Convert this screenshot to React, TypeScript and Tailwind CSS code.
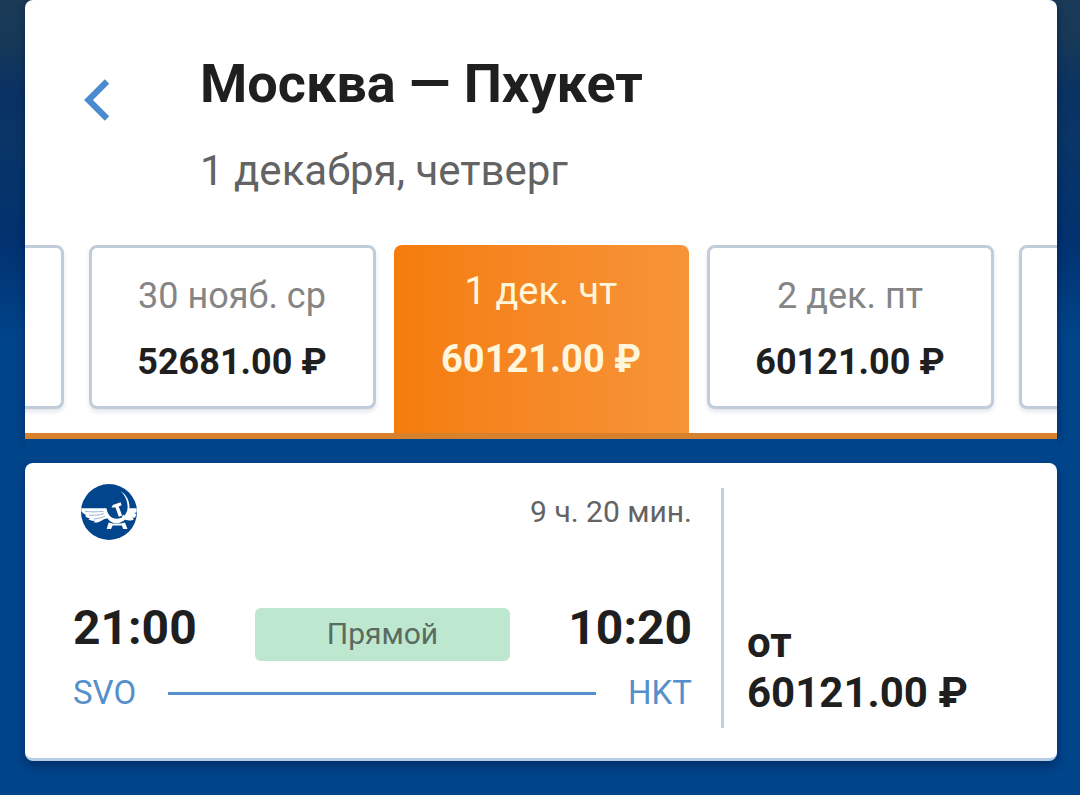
import { useState } from 'react';
import { clsx } from 'clsx';

interface Day {
    id: number;
    date: string;
    price: string;
}

const DAYS: Day[] = [
    { id: 0, date: '', price: '' },
    { id: 1, date: '30 нояб. ср', price: '52681.00 ₽' },
    { id: 2, date: '1 дек. чт', price: '60121.00 ₽' },
    { id: 3, date: '2 дек. пт', price: '60121.00 ₽' },
    { id: 4, date: '', price: '' },
];

function BackIcon() {
    return (
        <svg viewBox="0 0 26 42" className="w-[26px] h-[42px]" fill="none" stroke="#4a8bd0" strokeWidth="6.2" strokeLinejoin="miter">
            <path d="M23 2.500 4.500 21 23 39.500" />
        </svg>
    );
}

// Round airline badge: winged hammer and sickle
function AirlineLogo() {
    return (
        <svg viewBox="0 0 56 56" className="w-14 h-14" role="img" aria-label="Аэрофлот">
            <circle cx="28" cy="28" r="28" fill="#03458c" />
            <g fill="#fff">
                <path d="M.3 24.300H24c.1 4.200 1.300 7 3.500 9.700l-4.500 1.200c-3.600 2.200-6.600 3.800-10.400 3.300l1.400-1.700c-2.600.4-5.200-.3-6.800-1.700l2.200-.6c-3-.4-4.600-1.500-5.600-3l2-.3C3.400 30.500 1.500 29.100.3 27.300Z" />
                <path d="M47.600 24.300h8.100v4.300l-2.700.3 2.300 1.200c-.4 1.400-.6 2.200-1.300 3.600l-2.600-.1 1.500 1.600c-1.800 1.500-5 1.800-8.700.4 2.200-3 3.400-6.600 3.400-11.300Z" />
                <path d="m27.600 38.600 3.900.8 8.500.2 3.900-1 2.600 6.400h-4.300l-1.300-3.500H31.700L30 45h-4.300Z" />
                <path d="m30.600 23.400 1.200-2.300 7.800-2.800 1 3-2.900 1.100 3.400 9-3.300 1.400-3.300-9.300Z" />
                <path d="M39.500 7c5.800 3.600 9 9.500 9 16.300 0 9.300-5.600 15.900-13 15.900-6.800 0-11.500-5.500-12-14.900h1.900c1.300 6.700 5 10.500 10.100 10.500 6.400 0 11.100-4.900 11.100-11.700 0-6.200-2.400-11.500-7.100-16.100Z" />
                <path d="m42.300 30.800 4.700 4-1.500 1.500-4.700-4.100Z" />
            </g>
            <path d="M4 27.300c6 .8 12 .7 18.500 0M8 31.200c5.500.4 10.500-.2 15-1.500M12.500 35c4.500-.2 8-1.200 11.500-2.800" fill="none" stroke="#6f96c2" strokeWidth=".7" />
        </svg>
    );
}

interface DayTabProps {
    day: Day;
    active: boolean;
    onSelect: () => void;
}

function DayTab({ day, active, onSelect }: DayTabProps) {
    return (
        <button
            type="button"
            onClick={onSelect}
            aria-label={day.date || 'Другая дата'}
            className={clsx(
                'shrink-0 flex flex-col items-center whitespace-nowrap cursor-pointer',
                active
                    ? 'w-[295px] h-[188px] -mx-[7px] pt-5 gap-4 rounded-t-lg bg-linear-to-r from-[#f57c0a] to-[#f79437] text-[#fff6dc] text-[38px]'
                    : 'w-[287px] h-[164px] pt-[22px] gap-[14px] rounded-lg border-[3px] border-[#c1ccdb] bg-white shadow-[0_3px_4px_rgba(40,60,110,0.12)] text-4xl'
            )}
        >
            <span className={clsx('leading-[52px]', !active && 'text-[#858585]')}>{day.date}</span>
            <span className={clsx('font-bold leading-[52px]', !active && 'text-[#1f1f1f]')}>{day.price}</span>
        </button>
    );
}

export default function App() {
    const [selected, setSelected] = useState(2);

    return (
        <div className="min-h-screen pl-[25px] pr-[23px] pb-8 bg-[#00448a] bg-[linear-gradient(#1a3a57_0,#173957_40px,#0a3263_90px,#093566_140px,#02316f_240px,#00448a_340px)] font-['Roboto',sans-serif] text-[#1f1f1f]">
            <header className="overflow-hidden rounded-t-lg bg-white border-b-[6px] border-[#d7812d] shadow-[0_2px_8px_rgba(0,20,60,0.5)]">
                <div className="flex pt-[51px] pl-[59px]">
                    <button type="button" aria-label="Назад" className="w-[116px] h-[42px] mt-7 shrink-0 cursor-pointer">
                        <BackIcon />
                    </button>
                    <div>
                        <h1 className="text-[54px] leading-[66px] font-bold">Москва — Пхукет</h1>
                        <p className="mt-7 text-[42px] leading-[52px] text-[#636363]">1 декабря, четверг</p>
                    </div>
                </div>
                <nav aria-label="Даты" className="mt-12 h-[188px] flex justify-center items-start gap-[25px] overflow-hidden">
                    {DAYS.map(day => (
                        <DayTab key={day.id} day={day} active={day.id === selected} onSelect={() => setSelected(day.id)} />
                    ))}
                </nav>
            </header>

            <div className="h-6 bg-[#00448a]" />

            <article className="flex pt-[25px] pb-[30px] bg-white rounded-lg border-b-[3px] border-[#b5cde6] shadow-[0_5px_10px_rgba(0,20,60,0.45)]">
                <section className="flex-1 pl-12 pr-[29px]">
                    <div className="flex items-start justify-between pl-2">
                        <div className="-mt-1">
                            <AirlineLogo />
                        </div>
                        <span className="text-[30px] leading-[48px] text-[#636363]">9 ч. 20 мин.</span>
                    </div>
                    <div className="flex items-start justify-between mt-[62px]">
                        <time className="text-5xl leading-[52px] font-bold">21:00</time>
                        <span className="w-[255px] h-[53px] mt-[6px] rounded-md bg-[#bee7d0] text-center text-[30px] leading-[52px] text-[#5a6b60]">Прямой</span>
                        <time className="text-5xl leading-[52px] font-bold">10:20</time>
                    </div>
                    <div className="flex items-center justify-between gap-8 mt-[6px] text-[33px] leading-[52px] text-[#5590cb]">
                        <span>SVO</span>
                        <span className="flex-1 h-[3px] bg-[#5590cb]" />
                        <span>HKT</span>
                    </div>
                </section>
                <section className="w-[336px] h-[240px] pl-[23px] pb-[10px] flex flex-col justify-end border-l-[3px] border-[#c3ced8] text-[42px] leading-[50px] font-bold">
                    <span>от</span>
                    <span>60121.00 ₽</span>
                </section>
            </article>
        </div>
    );
}
